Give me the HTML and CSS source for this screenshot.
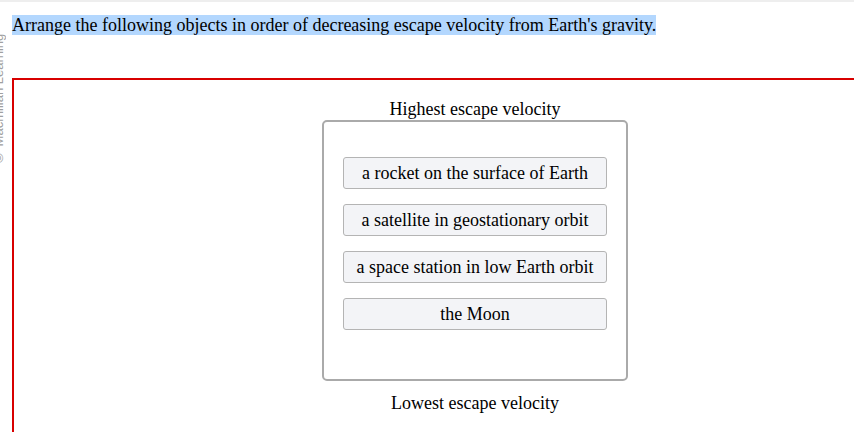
FILE: index.html
```html
<!DOCTYPE html>
<html>
<head>
<meta charset="utf-8">
<link rel="stylesheet" href="styles.css">
</head>
<body>
<div class="page">
  <div class="watermark">© Macmillan Learning</div>
  <p class="prompt"><span class="hl">Arrange the following objects in order of decreasing escape velocity from Earth's gravity.</span></p>
  <div class="answer">
    <div class="ranker">
      <div class="label">Highest escape velocity</div>
      <div class="box">
        <div class="item">a rocket on the surface of Earth</div>
        <div class="item">a satellite in geostationary orbit</div>
        <div class="item">a space station in low Earth orbit</div>
        <div class="item">the Moon</div>
      </div>
      <div class="label bottom">Lowest escape velocity</div>
    </div>
  </div>
</div>
</body>
</html>
```
FILE: styles.css
```css
html, body {
  margin: 0;
  padding: 0;
  background: #fff;
  overflow: hidden;
}
body {
  font-family: "Liberation Serif", "Times New Roman", serif;
  color: #000;
}
.page {
  position: relative;
  width: 854px;
  height: 432px;
  overflow: hidden;
  border-top: 2px solid #eeeeee;
  box-sizing: border-box;
  padding-left: 12px;
  padding-top: 10px;
}
.watermark {
  position: absolute;
  left: -8px;
  top: 25px;
  font-family: "Liberation Sans", Arial, sans-serif;
  font-size: 13px;
  color: #a0a0a0;
  writing-mode: vertical-rl;
  transform: rotate(180deg);
  line-height: 14px;
  height: 138px;
}
.prompt {
  margin: 0;
  font-size: 18px;
  line-height: 26px;
}
.hl {
  background: #b3d7fe;
}
.answer {
  margin-top: 40px;
  border-top: 2px solid #d80000;
  border-left: 2px solid #d80000;
  width: 842px;
  height: 354px;
  box-sizing: border-box;
  padding-top: 16px;
}
.ranker {
  width: 306px;
  margin-left: 308px;
  display: flex;
  flex-direction: column;
  align-items: stretch;
}
.label {
  text-align: center;
  font-size: 18px;
  line-height: 26px;
  margin-bottom: -2px;
}
.label.bottom {
  margin-top: 9px;
  margin-bottom: 0;
}
.box {
  border: 2px solid #aaaaaa;
  border-radius: 5px;
  height: 261px;
  box-sizing: border-box;
  padding: 35px 19px 0 19px;
  display: flex;
  flex-direction: column;
  gap: 15px;
}
.item {
  height: 32px;
  box-sizing: border-box;
  border: 1px solid #b4b4b4;
  border-radius: 3px;
  background: #f3f4f7;
  text-align: center;
  font-size: 18px;
  line-height: 30px;
}
```
